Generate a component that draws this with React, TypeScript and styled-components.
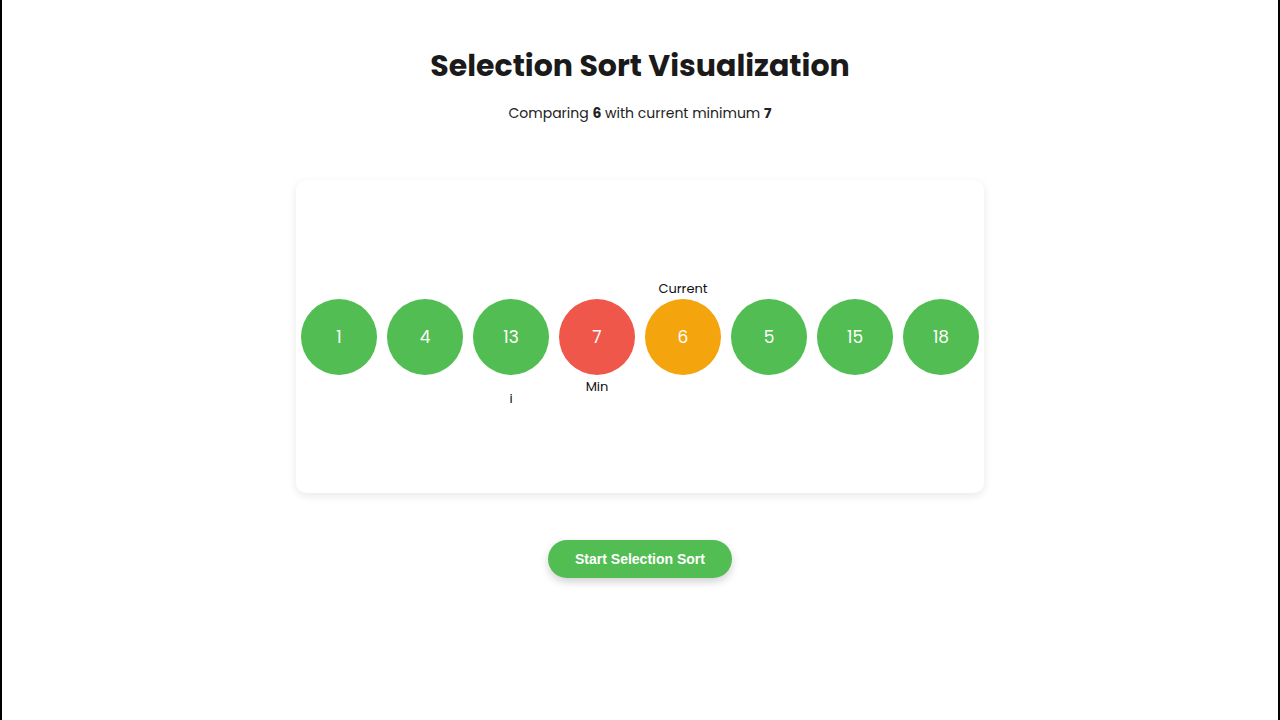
import React from 'react';
import styled, { createGlobalStyle } from 'styled-components';

type Role = 'sorted' | 'min' | 'current' | 'idle';

interface Item {
  value: number;
  role: Role;
  above?: string;
  below?: string;
  belowOffset?: number;
}

const GlobalStyle = createGlobalStyle`
  html, body {
    margin: 0;
    padding: 0;
    background: #ffffff;
    font-family: "Poppins", "Inter", "Noto Sans", sans-serif;
  }
`;

const Frame = styled.div`
  height: 720px;
  box-sizing: border-box;
  border-left: 2px solid #000;
  border-right: 2px solid #000;
  display: flex;
  flex-direction: column;
  align-items: center;
  padding-top: 44px;
`;

const Title = styled.h1`
  margin: 0;
  font-size: 30px;
  font-weight: 700;
  color: #1a1a1a;
  line-height: 44px;
`;

const Status = styled.p`
  margin: 15px 0 0;
  font-size: 14px;
  color: #222;
  line-height: 20px;

  b {
    font-weight: 700;
  }
`;

const Card = styled.div`
  margin-top: 57px;
  width: 688px;
  height: 313px;
  background: #fff;
  border-radius: 10px;
  box-shadow: 0 3px 10px rgba(0, 0, 0, 0.09);
  display: flex;
  align-items: center;
`;

const Slot = styled.div`
  width: 86px;
  display: flex;
  justify-content: center;
  position: relative;
`;

const colors: Record<Role, string> = {
  sorted: '#52bd52',
  idle: '#52bd52',
  min: '#f0574b',
  current: '#f4a40c',
};

const Ball = styled.div<{ $role: Role }>`
  width: 76px;
  height: 76px;
  border-radius: 50%;
  background: ${p => colors[p.$role]};
  color: #fff;
  font-size: 17px;
  display: flex;
  align-items: center;
  justify-content: center;
`;

const Tag = styled.span<{ $pos: 'above' | 'below'; $offset?: number }>`
  position: absolute;
  left: 0;
  right: 0;
  text-align: center;
  font-size: 13px;
  color: #111;
  line-height: 16px;
  ${p => (p.$pos === 'above' ? 'top: -18px;' : `bottom: ${-20 - (p.$offset || 0)}px;`)}
`;

const Button = styled.button`
  margin-top: 47px;
  width: 184px;
  height: 38px;
  border: none;
  border-radius: 19px;
  background: #52bd52;
  color: #fff;
  font-family: "Liberation Sans", Arial, sans-serif;
  font-size: 14px;
  font-weight: 700;
  box-shadow: 0 4px 8px rgba(0, 0, 0, 0.18);
  cursor: pointer;
`;

const items: Item[] = [
  { value: 1, role: 'sorted' },
  { value: 4, role: 'sorted' },
  { value: 13, role: 'idle', below: 'i', belowOffset: 12 },
  { value: 7, role: 'min', below: 'Min' },
  { value: 6, role: 'current', above: 'Current' },
  { value: 5, role: 'idle' },
  { value: 15, role: 'idle' },
  { value: 18, role: 'idle' },
];

const App: React.FC = () => (
  <>
    <GlobalStyle />
    <Frame>
      <Title>Selection Sort Visualization</Title>
      <Status>
        Comparing <b>6</b> with current minimum <b>7</b>
      </Status>
      <Card>
        {items.map((item, i) => (
          <Slot key={i}>
            {item.above && <Tag $pos="above">{item.above}</Tag>}
            <Ball $role={item.role}>{item.value}</Ball>
            {item.below && (
              <Tag $pos="below" $offset={item.belowOffset}>
                {item.below}
              </Tag>
            )}
          </Slot>
        ))}
      </Card>
      <Button>Start Selection Sort</Button>
    </Frame>
  </>
);

export default App;
